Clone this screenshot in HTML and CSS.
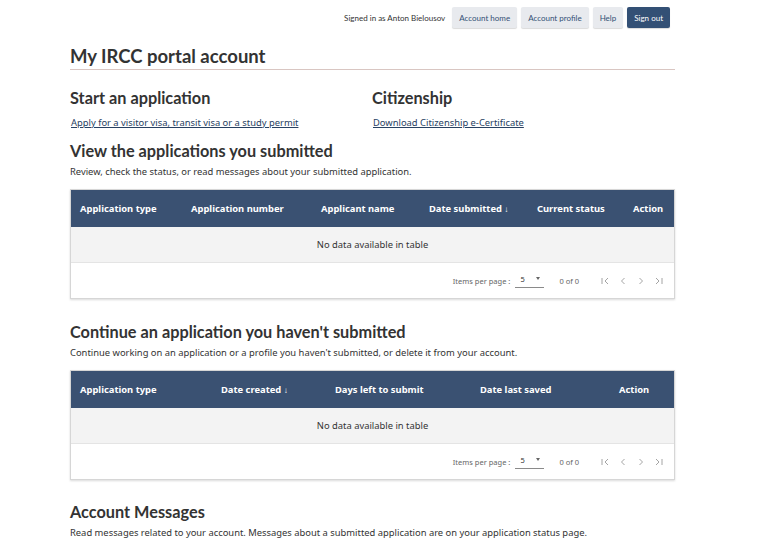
FILE: index.html
```html
<!DOCTYPE html>
<html lang="en">
  <head>
    <meta charset="UTF-8" />
    <meta name="viewport" content="width=device-width, initial-scale=1.0" />
    <title>My IRCC portal account</title>
    <link rel="stylesheet" href="styles.css">
  </head>
  <body>
    <header class="topbar">
      <span class="signed-in">Signed in as Anton Bielousov</span>
      <button type="button" class="btn">Account home</button>
      <button type="button" class="btn">Account profile</button>
      <button type="button" class="btn">Help</button>
      <button type="button" class="btn btn-primary">Sign out</button>
    </header>

    <main class="page">
      <h1 class="page-title">My IRCC portal account</h1>

      <div class="quick-links">
        <section class="quick">
          <h2>Start an application</h2>
          <a href="#">Apply for a visitor visa, transit visa or a study permit</a>
        </section>
        <section class="quick">
          <h2>Citizenship</h2>
          <a href="#">Download Citizenship e-Certificate</a>
        </section>
      </div>

      <section class="block">
        <h2>View the applications you submitted</h2>
        <p class="desc">Review, check the status, or read messages about your submitted application.</p>
        <div class="table-card">
          <div class="thead cols-submitted">
            <span>Application type</span>
            <span>Application number</span>
            <span>Applicant name</span>
            <span>Date submitted <i class="arrow">&#8595;</i></span>
            <span>Current status</span>
            <span>Action</span>
          </div>
          <div class="empty">No data available in table</div>
          <div class="paginator">
            <span class="pg-label">Items per page :</span>
            <span class="pg-select">5 <i class="caret"></i></span>
            <span class="pg-range">0 of 0</span>
            <span class="pg-nav"><svg viewBox="0 0 10 10"><path d="M2 2v6M8 2L5 5l3 3"/></svg></span>
            <span class="pg-nav"><svg viewBox="0 0 10 10"><path d="M6.5 2L3.5 5l3 3"/></svg></span>
            <span class="pg-nav"><svg viewBox="0 0 10 10"><path d="M3.5 2l3 3-3 3"/></svg></span>
            <span class="pg-nav"><svg viewBox="0 0 10 10"><path d="M2 2l3 3-3 3M8 2v6"/></svg></span>
          </div>
        </div>
      </section>

      <section class="block">
        <h2>Continue an application you haven't submitted</h2>
        <p class="desc">Continue working on an application or a profile you haven't submitted, or delete it from your account.</p>
        <div class="table-card">
          <div class="thead cols-drafts">
            <span>Application type</span>
            <span>Date created <i class="arrow">&#8595;</i></span>
            <span>Days left to submit</span>
            <span>Date last saved</span>
            <span>Action</span>
          </div>
          <div class="empty">No data available in table</div>
          <div class="paginator">
            <span class="pg-label">Items per page :</span>
            <span class="pg-select">5 <i class="caret"></i></span>
            <span class="pg-range">0 of 0</span>
            <span class="pg-nav"><svg viewBox="0 0 10 10"><path d="M2 2v6M8 2L5 5l3 3"/></svg></span>
            <span class="pg-nav"><svg viewBox="0 0 10 10"><path d="M6.5 2L3.5 5l3 3"/></svg></span>
            <span class="pg-nav"><svg viewBox="0 0 10 10"><path d="M3.5 2l3 3-3 3"/></svg></span>
            <span class="pg-nav"><svg viewBox="0 0 10 10"><path d="M2 2l3 3-3 3M8 2v6"/></svg></span>
          </div>
        </div>
      </section>

      <section class="block">
        <h2>Account Messages</h2>
        <p class="desc">Read messages related to your account. Messages about a submitted application are on your application status page.</p>
      </section>
    </main>
  </body>
</html>
```

FILE: styles.css
```css
*,
*::before,
*::after {
  box-sizing: border-box;
}
* {
  margin: 0;
}
body {
  background-color: #ffffff;
  color: #333333;
  font-family: "Noto Sans", sans-serif;
}

/* top bar */
.topbar {
  display: flex;
  justify-content: flex-end;
  align-items: center;
  gap: 4px;
  width: 670px;
  padding-top: 7px;
}
.signed-in {
  font-family: Lato, sans-serif;
  font-size: 8px;
  color: #333333;
  margin-right: 3px;
}
.btn {
  font-family: Lato, sans-serif;
  font-size: 8px;
  height: 21px;
  padding: 0 7px;
  border: none;
  border-radius: 2px;
  background-color: #e8eaee;
  color: #335075;
  box-shadow: 0 1px 1px rgba(0, 0, 0, 0.15);
}
.btn-primary {
  background-color: #335075;
  color: #ffffff;
}

/* page */
.page {
  width: 605px;
  margin-left: 70px;
}
h1,
h2 {
  font-family: Lato, sans-serif;
  font-weight: 700;
  color: #333333;
}
.page-title {
  font-size: 18.5px;
  line-height: 24px;
  margin-top: 16px;
  padding-bottom: 1px;
  border-bottom: 1px solid #d9c6c2;
}
h2 {
  font-size: 16.3px;
  line-height: 22px;
}

.quick-links {
  display: flex;
  margin-top: 17px;
}
.quick {
  width: 302px;
}
.quick a {
  display: inline-block;
  margin-left: 1px;
  font-size: 9.4px;
  color: #284162;
}

.block {
  margin-top: 9px;
}
.block + .block {
  margin-top: 22px;
}
.block:last-child {
  margin-top: 21px;
}
.desc {
  font-size: 9.4px;
  margin-top: 3px;
  color: #333333;
}

/* tables */
.table-card {
  margin-top: 11px;
  border: 1px solid #d6d6d6;
  box-shadow: 0 1px 2px rgba(0, 0, 0, 0.15);
}
.thead {
  display: grid;
  align-items: center;
  height: 37px;
  padding-left: 9px;
  background-color: #3a5172;
  color: #ffffff;
  font-size: 9.4px;
  font-weight: 700;
}
.cols-submitted {
  grid-template-columns: 111px 130px 108px 108px 96px 1fr;
}
.cols-drafts {
  grid-template-columns: 141px 114px 145px 139px 1fr;
}
.arrow {
  font-style: normal;
  font-weight: 400;
  font-size: 8px;
}
.empty {
  height: 36px;
  line-height: 36px;
  text-align: center;
  font-size: 9.4px;
  background-color: #f3f3f3;
  border-bottom: 1px solid #e4e4e4;
}
.paginator {
  display: flex;
  justify-content: flex-end;
  align-items: center;
  height: 35px;
  padding-right: 6px;
  font-size: 7.5px;
  color: #666666;
}
.pg-label {
  margin-right: 1px;
}
.pg-select {
  display: inline-flex;
  align-items: center;
  justify-content: space-between;
  width: 29px;
  margin-left: 4px;
  padding: 0 4px 3px 5px;
  border-bottom: 1px solid #8a8a8a;
  color: #333333;
}
.caret {
  width: 0;
  height: 0;
  border-left: 2.5px solid transparent;
  border-right: 2.5px solid transparent;
  border-top: 3px solid #666666;
}
.pg-range {
  margin-left: 15px;
  margin-right: 17px;
}
.pg-nav {
  display: flex;
  justify-content: center;
  width: 18px;
}
.pg-nav svg {
  width: 10px;
  height: 10px;
  fill: none;
  stroke: #9a9a9a;
  stroke-width: 0.9;
}
```
